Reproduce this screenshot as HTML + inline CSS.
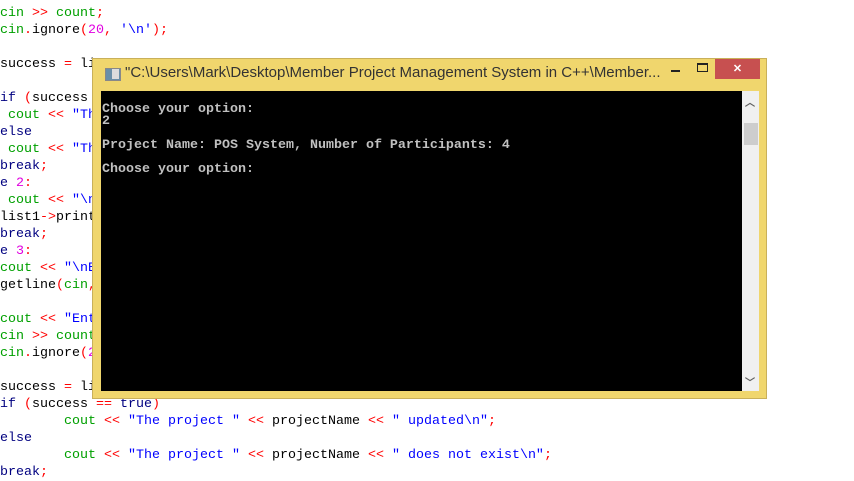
<!DOCTYPE html>
<html><head><meta charset="utf-8"><style>
body{margin:0;width:854px;height:470px;overflow:hidden;background:#fff;position:relative}
.code{position:absolute;left:0;top:5px;font:13.33px/17px "Liberation Mono",monospace;white-space:pre;color:#000}
.g{color:#00a000}.r{color:#f00}.b{color:#0000ff}.k{color:#000080}.m{color:#e000e0}
.frame{position:absolute;left:92px;top:58px;width:675px;height:341px;background:#f0d66d;border:1px solid #c9b05a;box-sizing:border-box}
.title{position:absolute;left:125px;top:64px;font:15px "Liberation Sans",sans-serif;color:#333;white-space:nowrap}
.icon{position:absolute;left:105px;top:68px;width:14px;height:11px;background:#6a8fa8;border:1px solid #888}
.icon:after{content:"";position:absolute;left:6px;top:0;width:7px;height:10px;background:#ddd}
.close{position:absolute;left:715px;top:59px;width:45px;height:20px;background:#c75050;color:#fff;font:bold 11px "Liberation Sans",sans-serif;text-align:center;line-height:20px}
.min{position:absolute;left:671px;top:70px;width:9px;height:2px;background:#222}
.max{position:absolute;left:697px;top:63px;width:9px;height:6px;border:1px solid #222;border-top-width:2px}
.con{position:absolute;left:101px;top:91px;width:641px;height:300px;background:#000;font:bold 13.33px/12px "Liberation Mono",monospace;color:#c0c0c0;white-space:pre;padding-top:13px;padding-left:1px;box-sizing:border-box}
.sb{position:absolute;left:742px;top:91px;width:17px;height:300px;background:#f0f0f0}
.th{position:absolute;left:744px;top:123px;width:14px;height:22px;background:#cdcdcd}
.ar{position:absolute;left:745px;font:bold 10px "Liberation Sans",sans-serif;color:#606060}
</style></head><body>
<div class="code"><span class="g">cin</span> <span class="r">&gt;&gt;</span> <span class="g">count</span><span class="r">;</span>
<span class="g">cin</span><span class="r">.</span>ignore<span class="r">(</span><span class="m">20</span><span class="r">,</span> <span class="b">'\n'</span><span class="r">);</span>

success <span class="r">=</span> li

<span class="k">if</span> <span class="r">(</span>success
 <span class="g">cout</span> <span class="r">&lt;&lt;</span> <span class="b">"Th</span>
<span class="k">else</span>
 <span class="g">cout</span> <span class="r">&lt;&lt;</span> <span class="b">"Th</span>
<span class="k">break</span><span class="r">;</span>
<span class="k">e</span> <span class="m">2</span><span class="r">:</span>
 <span class="g">cout</span> <span class="r">&lt;&lt;</span> <span class="b">"\n</span>
list1<span class="r">-&gt;</span>print
<span class="k">break</span><span class="r">;</span>
<span class="k">e</span> <span class="m">3</span><span class="r">:</span>
<span class="g">cout</span> <span class="r">&lt;&lt;</span> <span class="b">"\nE</span>
getline<span class="r">(</span><span class="g">cin</span><span class="r">,</span>

<span class="g">cout</span> <span class="r">&lt;&lt;</span> <span class="b">"Ent</span>
<span class="g">cin</span> <span class="r">&gt;&gt;</span> <span class="g">count</span>
<span class="g">cin</span><span class="r">.</span>ignore<span class="r">(</span><span class="m">2</span>

success <span class="r">=</span> li
<span class="k">if</span> <span class="r">(</span>success <span class="r">==</span> <span class="k">true</span><span class="r">)</span>
        <span class="g">cout</span> <span class="r">&lt;&lt;</span> <span class="b">"The project "</span> <span class="r">&lt;&lt;</span> projectName <span class="r">&lt;&lt;</span> <span class="b">" updated\n"</span><span class="r">;</span>
<span class="k">else</span>
        <span class="g">cout</span> <span class="r">&lt;&lt;</span> <span class="b">"The project "</span> <span class="r">&lt;&lt;</span> projectName <span class="r">&lt;&lt;</span> <span class="b">" does not exist\n"</span><span class="r">;</span>
<span class="k">break</span><span class="r">;</span></div>
<div class="frame"></div>
<div class="icon"></div>
<div class="title">"C:\Users\Mark\Desktop\Member Project Management System in C++\Member...</div>
<div class="min"></div><div class="max"></div>
<div class="close">✕</div>
<div class="con">Choose your option:
2

Project Name: POS System, Number of Participants: 4

Choose your option:</div>
<div class="sb"></div><div class="th"></div>
<div class="ar" style="top:94px">︿</div>
<div class="ar" style="top:374px">﹀</div>
</body></html>
